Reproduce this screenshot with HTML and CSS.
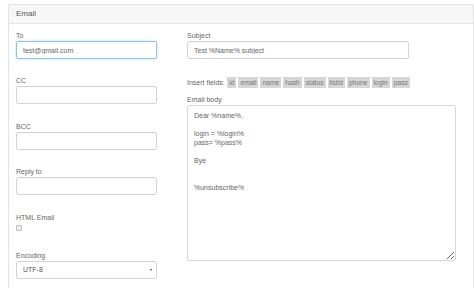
FILE: index.html
```html
<!DOCTYPE html>
<html>
<head>
<meta charset="utf-8">
<link rel="stylesheet" href="styles.css">
</head>
<body>
<div class="panel">
  <div class="panel-heading">Email</div>
  <div class="panel-body">
    <div class="col-left">
      <div class="group">
        <label class="lbl">To</label>
        <input class="field focused" type="text" value="test@gmail.com">
      </div>
      <div class="group">
        <label class="lbl">CC</label>
        <input class="field" type="text" value="">
      </div>
      <div class="group">
        <label class="lbl">BCC</label>
        <input class="field" type="text" value="">
      </div>
      <div class="group">
        <label class="lbl">Reply to</label>
        <input class="field" type="text" value="">
      </div>
      <div class="group group-check">
        <label class="lbl">HTML Email</label>
        <input class="check" type="checkbox">
      </div>
      <div class="group last">
        <label class="lbl">Encoding</label>
        <div class="select">UTF-8<span class="caret"></span></div>
      </div>
    </div>
    <div class="col-right">
      <div class="group">
        <label class="lbl">Subject</label>
        <input class="field subject" type="text" value="Test %Name% subject">
      </div>
      <div class="insert-row">
        <span class="insert-label">Insert fields:</span>
        <span class="tag">id</span>
        <span class="tag">email</span>
        <span class="tag">name</span>
        <span class="tag">hash</span>
        <span class="tag">status</span>
        <span class="tag">listid</span>
        <span class="tag">phone</span>
        <span class="tag">login</span>
        <span class="tag">pass</span>
      </div>
      <div class="group last">
        <label class="lbl">Email body</label>
        <textarea class="body-text">Dear %name%,

login = %login%
pass= %pass%

Bye


%unsubscribe%</textarea>
      </div>
    </div>
  </div>
</div>
</body>
</html>
```
FILE: styles.css
```css
html, body {
  margin: 0;
  padding: 0;
  background: #ffffff;
  font-family: "Liberation Sans", Arial, sans-serif;
  color: #666;
}
.panel {
  margin: 4px 0 0 8px;
  width: 466px;
  height: 284px;
  box-sizing: border-box;
  border: 1px solid #e4e4e4;
  border-bottom: none;
  border-radius: 2px 2px 0 0;
  background: #fff;
  overflow: hidden;
}
.panel-heading {
  height: 18px;
  line-height: 18px;
  padding-left: 7px;
  font-size: 8px;
  color: #555;
  background: #f7f7f7;
  border-bottom: 1px solid #e4e4e4;
}
.panel-body {
  display: flex;
  gap: 30px;
  padding: 7px 0 0 7px;
}
.col-left {
  width: 141px;
  flex: 0 0 141px;
}
.col-right {
  width: 269px;
  flex: 0 0 269px;
}
.group {
  margin-bottom: 17.4px;
}
.group.last {
  margin-bottom: 0;
}
.lbl {
  display: block;
  height: 10px;
  line-height: 10px;
  font-size: 7px;
  color: #666;
}
.field {
  display: block;
  box-sizing: border-box;
  width: 141px;
  height: 18px;
  margin: 0;
  padding: 0 6px;
  border: 1px solid #d4d4d4;
  border-radius: 2px;
  font-family: "Liberation Sans", Arial, sans-serif;
  font-size: 7px;
  color: #666;
  background: #fff;
  outline: none;
  box-shadow: inset 0 1px 1px rgba(0,0,0,0.03);
}
.field.focused {
  border-color: #93c2e8;
  box-shadow: 0 0 3px rgba(102,175,233,0.45);
}
.field.subject {
  width: 222px;
}
.group-check {
  height: 21px;
}
.check {
  -webkit-appearance: none;
  appearance: none;
  display: block;
  width: 6px;
  height: 6px;
  margin: 2px 0 0 0;
  box-sizing: border-box;
  border: 1px solid #bdbdbd;
  border-radius: 1px;
  background: #efefef;
}
.select {
  position: relative;
  box-sizing: border-box;
  width: 141px;
  height: 18px;
  line-height: 16px;
  padding: 0 6px;
  border: 1px solid #d4d4d4;
  border-radius: 2px;
  font-size: 7px;
  color: #555;
  background: #fff;
}
.caret {
  position: absolute;
  right: 4px;
  top: 7px;
  width: 0;
  height: 0;
  border-left: 1.5px solid transparent;
  border-right: 1.5px solid transparent;
  border-top: 2.5px solid #444;
}
.insert-row {
  display: flex;
  align-items: center;
  gap: 2px;
  height: 12px;
  margin-bottom: 6.6px;
  font-size: 7px;
  color: #666;
}
.insert-label {
  margin-right: 0.5px;
}
.tag {
  display: inline-block;
  height: 11px;
  line-height: 11px;
  padding: 0 2px;
  font-size: 6.7px;
  color: #777;
  background: #d6d6d6;
}
.body-text {
  display: block;
  box-sizing: border-box;
  width: 269px;
  height: 156px;
  margin: 0;
  padding: 5px 6px;
  border: 1px solid #d8d8d8;
  border-radius: 2px;
  font-family: "Liberation Sans", Arial, sans-serif;
  font-size: 7px;
  line-height: 9px;
  color: #666;
  resize: vertical;
  outline: none;
}
```
